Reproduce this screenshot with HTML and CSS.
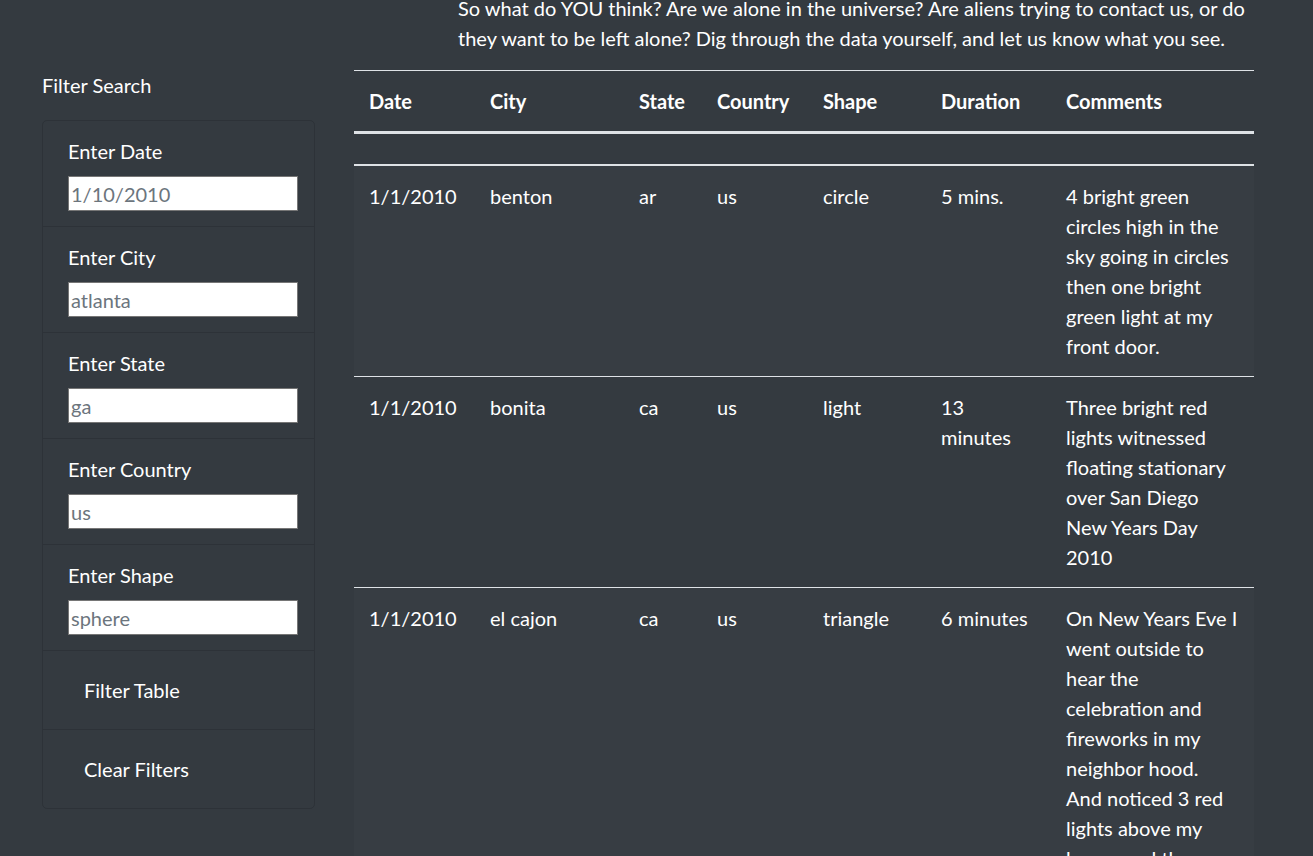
FILE: index.html
```html
<!DOCTYPE html>
<html lang="en">
	<head>
		<meta charset="UTF-8" />
		<meta name="viewport" content="width=device-width, initial-scale=1.0" />
		<title>UFO Sightings</title>
		<link rel="stylesheet" href="styles.css">
	</head>
	<body>
		<div class="page">
			<aside class="filters">
				<div class="filter-title">Filter Search</div>
				<form class="filter-card">
					<ul class="filter-list">
						<li class="filter-item">
							<label for="datetime">Enter Date</label>
							<input type="text" id="datetime" placeholder="1/10/2010" />
						</li>
						<li class="filter-item">
							<label for="city">Enter City</label>
							<input type="text" id="city" placeholder="atlanta" />
						</li>
						<li class="filter-item">
							<label for="state">Enter State</label>
							<input type="text" id="state" placeholder="ga" />
						</li>
						<li class="filter-item">
							<label for="country">Enter Country</label>
							<input type="text" id="country" placeholder="us" />
						</li>
						<li class="filter-item">
							<label for="shape">Enter Shape</label>
							<input type="text" id="shape" placeholder="sphere" />
						</li>
						<li class="filter-item">
							<button type="button" class="filter-btn">Filter Table</button>
						</li>
						<li class="filter-item">
							<button type="button" class="filter-btn">Clear Filters</button>
						</li>
					</ul>
				</form>
			</aside>
			<main class="content">
				<p class="intro">So what do YOU think? Are we alone in the universe? Are aliens trying to contact us, or do<br>they want to be left alone? Dig through the data yourself, and let us know what you see.</p>
				<table class="ufo-table">
					<colgroup>
						<col style="width: 121px" />
						<col style="width: 149px" />
						<col style="width: 78px" />
						<col style="width: 106px" />
						<col style="width: 118px" />
						<col style="width: 125px" />
						<col style="width: 203px" />
					</colgroup>
					<thead>
						<tr>
							<th>Date</th>
							<th>City</th>
							<th>State</th>
							<th>Country</th>
							<th>Shape</th>
							<th>Duration</th>
							<th>Comments</th>
						</tr>
					</thead>
					<tbody class="spacer">
						<tr><td colspan="7"></td></tr>
					</tbody>
					<tbody class="rows">
						<tr>
							<td>1/1/2010</td>
							<td>benton</td>
							<td>ar</td>
							<td>us</td>
							<td>circle</td>
							<td>5 mins.</td>
							<td class="comment">4 bright green circles high in the sky going in circles then one bright green light at my front door.</td>
						</tr>
						<tr>
							<td>1/1/2010</td>
							<td>bonita</td>
							<td>ca</td>
							<td>us</td>
							<td>light</td>
							<td>13 minutes</td>
							<td class="comment">Three bright red lights witnessed floating stationary over San Diego New Years Day 2010</td>
						</tr>
						<tr>
							<td>1/1/2010</td>
							<td>el cajon</td>
							<td>ca</td>
							<td>us</td>
							<td>triangle</td>
							<td>6 minutes</td>
							<td class="comment">On New Years Eve I went outside to hear the celebration and fireworks in my neighbor hood. And noticed 3 red lights above my house and then they moved away slowly.</td>
						</tr>
					</tbody>
				</table>
			</main>
		</div>
	</body>
</html>
```

FILE: styles.css
```css
body {
	margin: 0;
	background: #343a40;
	color: #fff;
	font-family: Lato, "Noto Sans", sans-serif;
	font-size: 20px;
	line-height: 1.5;
}

.page {
	display: flex;
	align-items: flex-start;
	padding-left: 42px;
}

.filters {
	width: 273px;
	margin-top: 70px;
}

.filter-title {
	margin-bottom: 20px;
}

.filter-card {
	border: 1px solid rgba(0, 0, 0, 0.125);
	border-radius: 5px;
}

.filter-list {
	list-style: none;
	margin: 0;
	padding: 0;
}

.filter-item {
	padding: 15px 25px;
	border-bottom: 1px solid rgba(0, 0, 0, 0.125);
}

.filter-item:last-child {
	border-bottom: none;
}

.filter-item label {
	display: block;
	margin-bottom: 10px;
}

.filter-item input {
	display: block;
	box-sizing: border-box;
	width: 230px;
	height: 35px;
	padding: 1px 2px;
	border: 1px solid #767676;
	font: inherit;
	background: #fff;
}

.filter-item input::placeholder {
	color: #6c757d;
}

.filter-btn {
	background: transparent;
	color: #fff;
	border: 1px solid transparent;
	padding: 8px 15px;
	font: inherit;
	line-height: 1.5;
	cursor: pointer;
}

.content {
	margin-left: 39px;
	width: 900px;
	margin-top: -7px;
}

.intro {
	margin: 0 0 17px;
	padding-left: 104px;
	white-space: nowrap;
}

.ufo-table {
	width: 900px;
	border-collapse: collapse;
	table-layout: fixed;
}

.ufo-table th,
.ufo-table td {
	padding: 15px;
	text-align: left;
	vertical-align: top;
}

.ufo-table .comment {
	padding-right: 16px;
}

.ufo-table th {
	font-weight: bold;
	border-top: 1px solid #dee2e6;
	border-bottom: 3px solid #dee2e6;
}

.rows {
	border-top: 2px solid #dee2e6;
}

.rows td {
	border-top: 1px solid #dee2e6;
}

.rows tr:nth-child(odd) {
	background: rgba(255, 255, 255, 0.02);
}
```
